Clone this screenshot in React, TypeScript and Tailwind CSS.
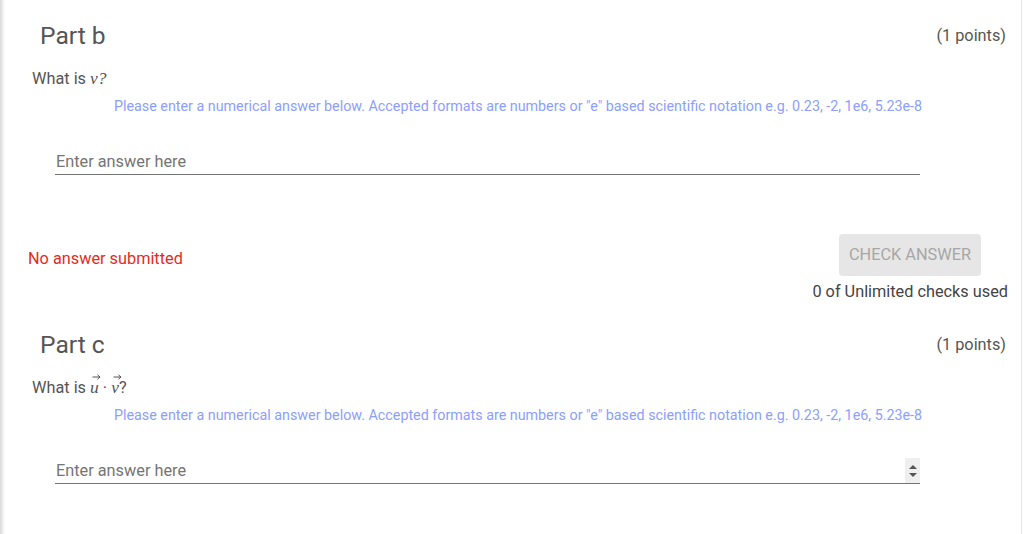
import React from "react";

const HINT =
  'Please enter a numerical answer below. Accepted formats are numbers or "e" based scientific notation e.g. 0.23, -2, 1e6, 5.23e-8';

function MathVar({ children }: { children: React.ReactNode }) {
  return (
    <span className="font-['Liberation_Serif',serif] italic text-[17.5px] leading-none">{children}</span>
  );
}

function Vec({ children }: { children: React.ReactNode }) {
  return (
    <span className="relative inline-block font-['Liberation_Serif',serif] italic text-[17.5px] leading-none">
      {children}
      <svg
        className="absolute left-[2px] top-[-5px]"
        width="9"
        height="6"
        viewBox="0 0 9 6"
        fill="none"
        stroke="#555"
        strokeWidth="1"
      >
        <path d="M0.5 3h7.5M5.5 0.8L8 3L5.5 5.2" />
      </svg>
    </span>
  );
}

function PartHeader({ title }: { title: string }) {
  return (
    <div className="flex h-[48px] items-center justify-between pl-[35px] pr-[15px]">
      <span className="text-[24.6px] text-[#555]">{title}</span>
      <span className="text-[16.3px] text-[#555]">(1 points)</span>
    </div>
  );
}

function AnswerInput({ spinner }: { spinner?: boolean }) {
  return (
    <div className="relative ml-[50px] mt-[33px] w-[865px]">
      <input
        type="text"
        placeholder="Enter answer here"
        className="block h-[26px] w-full border-b border-[#757575] bg-transparent px-px text-[16.3px] text-[#333] outline-none placeholder:text-[#757575]"
      />
      {spinner && (
        <div className="absolute bottom-[1px] right-0 top-0 flex w-[15px] flex-col items-center justify-center gap-[4px] bg-[#efefef]">
          <span className="h-0 w-0 border-x-[4px] border-b-[4px] border-x-transparent border-b-[#555]" />
          <span className="h-0 w-0 border-x-[4px] border-t-[4px] border-x-transparent border-t-[#555]" />
        </div>
      )}
    </div>
  );
}

export default function App() {
  return (
    <div className="flex h-[534px] w-[1024px] overflow-hidden bg-white font-['Roboto',sans-serif]">
      <div className="w-[5px] bg-gradient-to-r from-[#d9d9d9] to-white" />
      <div className="flex-1">
        <div className="mt-[12px]">
          <PartHeader title="Part b" />
        </div>
        <p className="mt-[7px] h-[24px] pl-[27px] text-[16.3px] leading-[24px] text-[#555]">
          What is <MathVar>v?</MathVar>
        </p>
        <p className="mt-[5px] h-[20px] pl-[109px] text-[14.3px] leading-[20px] text-[#8c9eff]">{HINT}</p>
        <AnswerInput />

        <div className="mt-[59px] flex items-start justify-between pr-[40px]">
          <span className="mt-[13px] pl-[23px] text-[16.3px] leading-[24px] text-[#e52b20]">
            No answer submitted
          </span>
          <button
            type="button"
            disabled
            className="h-[42px] w-[142px] rounded-[4px] bg-[#e6e6e6] text-[16.3px] text-[#a6a6a6]"
          >
            CHECK ANSWER
          </button>
        </div>
        <div className="mt-[4px] flex h-[24px] justify-end pr-[13px]">
          <span className="text-[16.3px] leading-[24px] text-[#444]">0 of Unlimited checks used</span>
        </div>

        <div className="mt-[17px]">
          <PartHeader title="Part c" />
        </div>
        <p className="mt-[7px] h-[24px] pl-[27px] text-[16.3px] leading-[24px] text-[#555]">
          What is <Vec>u</Vec> · <Vec>v</Vec>?
        </p>
        <p className="mt-[5px] h-[20px] pl-[109px] text-[14.3px] leading-[20px] text-[#8c9eff]">{HINT}</p>
        <AnswerInput spinner />
      </div>
      <div className="w-px bg-[#e6e6e6]" />
      <div className="w-[2px]" />
    </div>
  );
}
